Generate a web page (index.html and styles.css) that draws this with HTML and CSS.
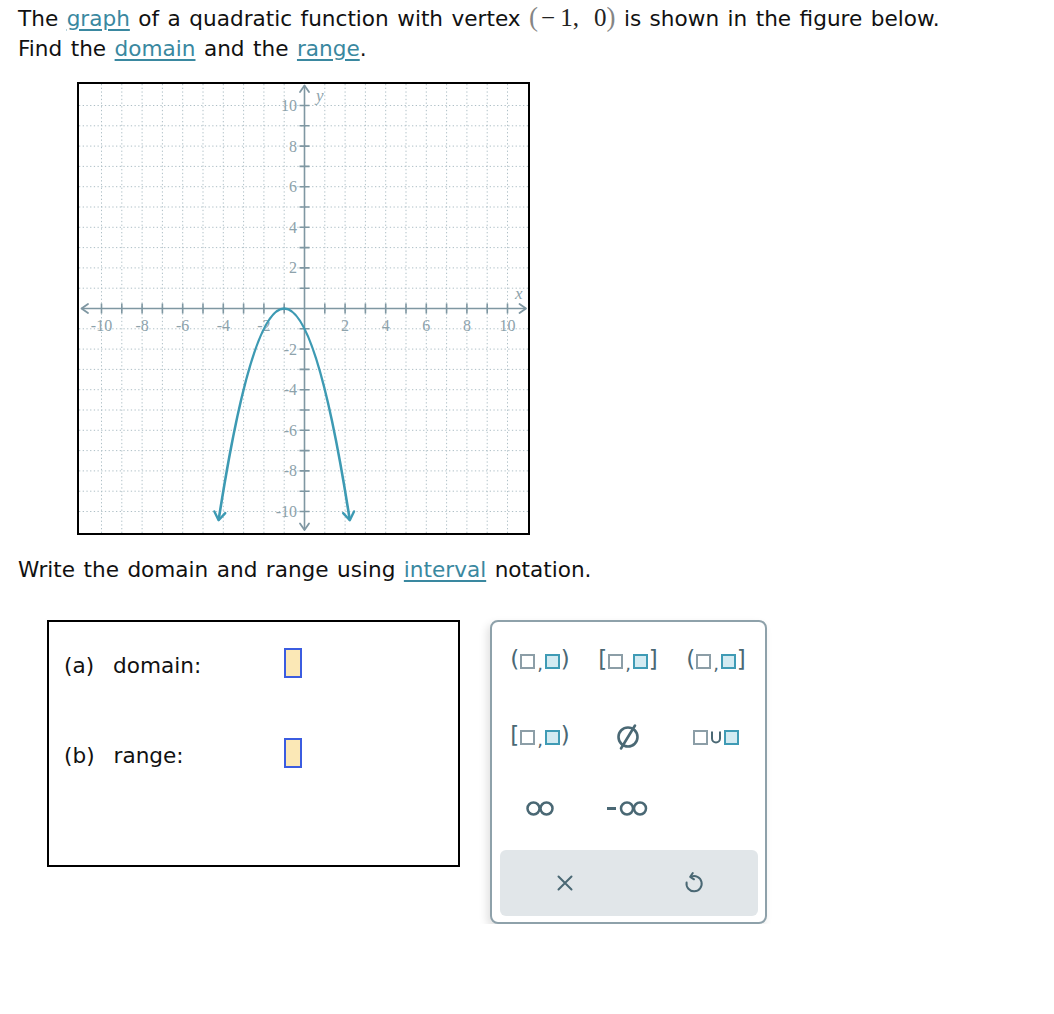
FILE: index.html
```html
<!DOCTYPE html>
<html lang="en">
<head>
<meta charset="utf-8">
<title>Domain and range</title>
<link rel="stylesheet" href="styles.css">
</head>
<body>
<div class="page">
  <p class="q">The <a href="#">graph</a> of a quadratic function with vertex <span class="m"><span class="par">(</span><span class="neg">−</span>1,<span class="sp"></span>0<span class="par">)</span></span> is shown in the figure below.<br>Find the <a href="#">domain</a> and the <a href="#">range</a>.</p>

  <div class="graph">
    <svg class="plot" width="449" height="449" viewBox="0 0 449 449">
      <defs>
        <marker id="ax" markerUnits="userSpaceOnUse" markerWidth="12" markerHeight="12" refX="10" refY="6" orient="auto-start-reverse" overflow="visible">
          <path d="M3.5 1.5 L10 6 L3.5 10.5" fill="none" stroke="#7f97a2" stroke-width="1.8" stroke-linecap="round" stroke-linejoin="round"/>
        </marker>
        <marker id="cv" markerUnits="userSpaceOnUse" markerWidth="14" markerHeight="14" refX="11" refY="7" orient="auto-start-reverse" overflow="visible">
          <path d="M3 1.5 L11 7 L3 12.5" fill="none" stroke="#3d9ab3" stroke-width="2.4" stroke-linecap="round" stroke-linejoin="round"/>
        </marker>
      </defs>
      <path class="grid" d="M22.5 0V449M42.8 0V449M63.1 0V449M83.4 0V449M103.7 0V449M124 0V449M144.3 0V449M164.6 0V449M184.9 0V449M205.2 0V449M245.8 0V449M266.1 0V449M286.4 0V449M306.7 0V449M327 0V449M347.3 0V449M367.6 0V449M387.9 0V449M408.2 0V449M428.5 0V449M0 21.5H449M0 41.8H449M0 62.1H449M0 82.4H449M0 102.7H449M0 123H449M0 143.3H449M0 163.6H449M0 183.9H449M0 204.2H449M0 244.8H449M0 265.1H449M0 285.4H449M0 305.7H449M0 326H449M0 346.3H449M0 366.6H449M0 386.9H449M0 407.2H449M0 427.5H449"/>
      <path class="axis" d="M2.5 224.5H447" marker-start="url(#ax)" marker-end="url(#ax)"/>
      <path class="axis" d="M225.5 446V1.5" marker-start="url(#ax)" marker-end="url(#ax)"/>
      <path class="axis" d="M22.5 219.5V229.5M42.8 219.5V229.5M63.1 219.5V229.5M83.4 219.5V229.5M103.7 219.5V229.5M124 219.5V229.5M144.3 219.5V229.5M164.6 219.5V229.5M184.9 219.5V229.5M205.2 219.5V229.5M245.8 219.5V229.5M266.1 219.5V229.5M286.4 219.5V229.5M306.7 219.5V229.5M327 219.5V229.5M347.3 219.5V229.5M367.6 219.5V229.5M387.9 219.5V229.5M408.2 219.5V229.5M428.5 219.5V229.5M220.5 21.5H230.5M220.5 41.8H230.5M220.5 62.1H230.5M220.5 82.4H230.5M220.5 102.7H230.5M220.5 123H230.5M220.5 143.3H230.5M220.5 163.6H230.5M220.5 183.9H230.5M220.5 204.2H230.5M220.5 244.8H230.5M220.5 265.1H230.5M220.5 285.4H230.5M220.5 305.7H230.5M220.5 326H230.5M220.5 346.3H230.5M220.5 366.6H230.5M220.5 386.9H230.5M220.5 407.2H230.5M220.5 427.5H230.5"/>
      <g class="lbl xl">
        <text x="22.5" y="247">-10</text>
        <text x="63.1" y="247">-8</text>
        <text x="103.7" y="247">-6</text>
        <text x="144.3" y="247">-4</text>
        <text x="184.9" y="247">-2</text>
        <text x="266.1" y="247">2</text>
        <text x="306.7" y="247">4</text>
        <text x="347.3" y="247">6</text>
        <text x="387.9" y="247">8</text>
        <text x="428.5" y="247">10</text>
      </g>
      <g class="lbl yl">
        <text x="218" y="27">10</text>
        <text x="218" y="67.5">8</text>
        <text x="218" y="108">6</text>
        <text x="218" y="148.5">4</text>
        <text x="218" y="189">2</text>
        <text x="218" y="270.5">-2</text>
        <text x="218" y="311">-4</text>
        <text x="218" y="351.5">-6</text>
        <text x="218" y="392">-8</text>
        <text x="218" y="432.5">-10</text>
      </g>
      <text class="var" x="237" y="17">y</text>
      <text class="var" x="436" y="215">x</text>
      <path class="curve" d="M139.6 436.2Q205.2 12.8 270.8 436.2" marker-start="url(#cv)" marker-end="url(#cv)"/>
    </svg>
  </div>

  <p class="q q2">Write the domain and range using <a href="#">interval</a> notation.</p>

  <div class="work">
    <div class="answer">
      <div class="qrow"><span class="lab"><span class="part">(a)</span>domain:</span><span class="slot"></span></div>
      <div class="qrow"><span class="lab"><span class="part">(b)</span>range:</span><span class="slot"></span></div>
    </div>

    <div class="palette">
      <div class="keys">
        <div class="key"><span class="iv"><span class="br">(</span><span class="sq"></span><span class="cm">,</span><span class="sq t"></span><span class="br">)</span></span></div>
        <div class="key"><span class="iv"><span class="br">[</span><span class="sq"></span><span class="cm">,</span><span class="sq t"></span><span class="br">]</span></span></div>
        <div class="key"><span class="iv"><span class="br">(</span><span class="sq"></span><span class="cm">,</span><span class="sq t"></span><span class="br">]</span></span></div>
        <div class="key"><span class="iv"><span class="br">[</span><span class="sq"></span><span class="cm">,</span><span class="sq t"></span><span class="br">)</span></span></div>
        <div class="key">
          <svg width="28" height="30" viewBox="0 0 28 30"><circle cx="14" cy="15" r="9.5" fill="none" stroke="#4a6874" stroke-width="2.6"/><path d="M21 3.5L7 26.5" stroke="#4a6874" stroke-width="2.6" stroke-linecap="round"/></svg>
        </div>
        <div class="key"><span class="iv"><span class="sq"></span><svg class="cup" width="12" height="15" viewBox="0 0 12 15"><path d="M2 1.5V8.5a4 4 0 0 0 8 0V1.5" fill="none" stroke="#4a6874" stroke-width="2"/></svg><span class="sq t"></span></span></div>
        <div class="key">
          <svg width="28" height="17" viewBox="0 0 28 17"><circle cx="7.5" cy="8.5" r="6" fill="none" stroke="#4a6874" stroke-width="2.5"/><circle cx="20.5" cy="8.5" r="6" fill="none" stroke="#4a6874" stroke-width="2.5"/></svg>
        </div>
        <div class="key">
          <svg width="44" height="17" viewBox="0 0 44 17"><rect x="1" y="7" width="9" height="3" fill="#4a6874"/><circle cx="21" cy="8.5" r="6" fill="none" stroke="#4a6874" stroke-width="2.5"/><circle cx="34" cy="8.5" r="6" fill="none" stroke="#4a6874" stroke-width="2.5"/></svg>
        </div>
      </div>
      <div class="bar">
        <div class="btn">
          <svg width="18" height="18" viewBox="0 0 18 18"><path d="M2.5 2.5L15.5 15.5M15.5 2.5L2.5 15.5" stroke="#4a6874" stroke-width="2" stroke-linecap="round"/></svg>
        </div>
        <div class="btn">
          <svg width="22" height="24" viewBox="0 0 22 24"><path d="M8 5.8A7.6 7.6 0 1 1 3.6 11.5" fill="none" stroke="#4a6874" stroke-width="2" stroke-linecap="round"/><path d="M9.8 2L7.2 5.8L11 8.3" fill="none" stroke="#4a6874" stroke-width="2" stroke-linecap="round" stroke-linejoin="round"/></svg>
        </div>
      </div>
    </div>
  </div>
</div>
</body>
</html>
```

FILE: styles.css
```css
body {
  margin: 0;
  background: #ffffff;
  color: #111111;
  font-family: "DejaVu Sans", Verdana, sans-serif;
}

.page {
  padding: 4px 18px 0;
}

.q {
  margin: 0;
  font-size: 21.6px;
  line-height: 30px;
  word-spacing: 1.6px;
}

.q a {
  color: #3a88a0;
  text-decoration: underline;
  text-decoration-thickness: 1.5px;
  text-underline-offset: 3px;
}

.m {
  font-family: "Liberation Serif", "Times New Roman", serif;
  font-size: 25px;
  line-height: 20px;
  color: #222222;
  word-spacing: 0;
}

.m .par {
  color: #858585;
  font-size: 27px;
  line-height: 20px;
}

.m .neg {
  margin: 0 5px 0 3px;
}

.m .sp {
  display: inline-block;
  width: 15px;
}

.graph {
  margin: 18px 0 0 59px;
  width: 449px;
  height: 449px;
  border: 2px solid #000000;
}

.plot {
  display: block;
}

.grid {
  fill: none;
  stroke: #aebfc6;
  stroke-width: 1;
  stroke-dasharray: 1.3 2.4;
}

.axis {
  fill: none;
  stroke: #7f97a2;
  stroke-width: 1.6;
}

.lbl text {
  font-family: "Liberation Serif", "Times New Roman", serif;
  font-size: 16px;
  fill: #8da2ab;
}

.xl text {
  text-anchor: middle;
}

.yl text {
  text-anchor: end;
}

.var {
  font-family: "Liberation Serif", "Times New Roman", serif;
  font-style: italic;
  font-size: 17px;
  fill: #8da2ab;
}

.curve {
  fill: none;
  stroke: #3d9ab3;
  stroke-width: 2.6;
}

.q2 {
  margin-top: 20px;
}

.work {
  display: flex;
  align-items: flex-start;
  margin-top: 35px;
}

.answer {
  box-sizing: border-box;
  margin-left: 29px;
  width: 413px;
  height: 247px;
  border: 2px solid #000000;
  padding: 26px 15px;
}

.qrow {
  display: flex;
  align-items: center;
  height: 30px;
  margin-bottom: 60px;
  font-size: 21.6px;
}

.lab {
  width: 220px;
  padding-top: 5px;
}

.part {
  margin-right: 19px;
}

.slot {
  box-sizing: border-box;
  width: 18px;
  height: 30px;
  border: 2px solid #3b5ce0;
  background: #fbe8b6;
}

.palette {
  box-sizing: border-box;
  margin-left: 30px;
  width: 277px;
  height: 304px;
  border: 2px solid #8ea1aa;
  border-radius: 8px;
  box-shadow: -3px 4px 8px rgba(0, 0, 0, 0.12);
  background: #ffffff;
}

.keys {
  display: grid;
  grid-template-columns: repeat(3, 88px);
  grid-template-rows: 76px 76px 66px;
  padding: 1px 0 0 4px;
}

.key {
  display: flex;
  align-items: center;
  justify-content: center;
}

.iv {
  display: inline-flex;
  align-items: center;
  color: #4a6874;
  font-family: "DejaVu Sans", Verdana, sans-serif;
  font-size: 23px;
  line-height: 1;
}

.br {
  margin-top: -3px;
}

.sq {
  box-sizing: border-box;
  width: 15px;
  height: 15px;
  border: 2px solid #8c9ea7;
  background: #ffffff;
  margin: 0 1px;
}

.sq.t {
  border-color: #3f9bb5;
  background: #d3ebf2;
}

.cm {
  font-size: 18px;
  margin: 6px 1px 0;
}

.cup {
  margin: 0 1px;
}

.bar {
  display: flex;
  margin: 9px 7px 0 8px;
  height: 66px;
  border-radius: 6px;
  background: #e1e6e9;
}

.btn {
  flex: 1;
  display: flex;
  align-items: center;
  justify-content: center;
}
```
